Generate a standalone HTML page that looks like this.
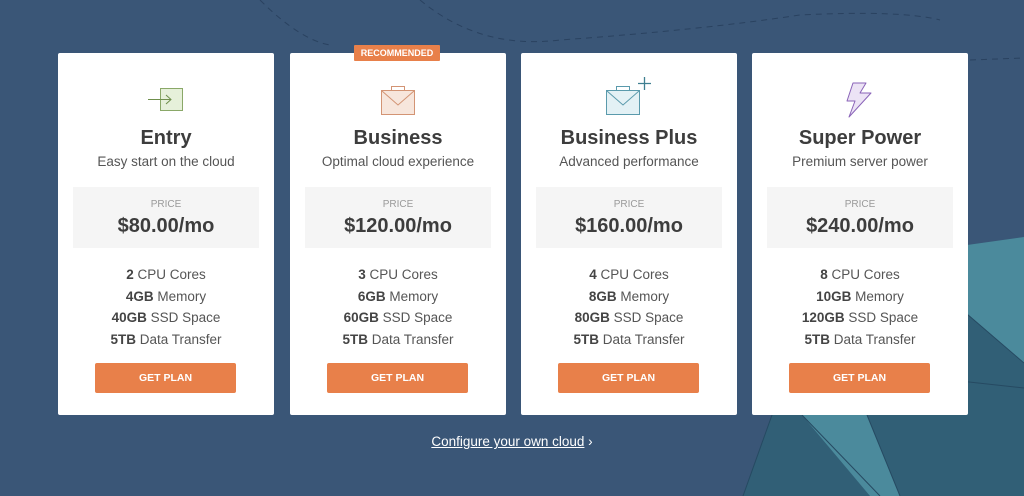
<!DOCTYPE html>
<html><head><style>
body{margin:0;width:1024px;height:496px;overflow:hidden;background:#3a5677;font-family:"Liberation Sans",sans-serif;position:relative}
.card{position:absolute;top:53px;width:216px;height:362px;background:#fff;border-radius:2px;text-align:center;color:#444}
.ic{position:absolute;left:0;top:28px;width:216px;height:40px;overflow:visible}
.t{position:absolute;left:0;right:0;font-size:20px;font-weight:bold;color:#3d3d3d;top:74px}
.s{position:absolute;top:101px;left:0;right:0;font-size:13.5px;color:#555}
.pb{position:absolute;left:15px;right:15px;top:134px;height:61px;background:#f5f5f5}
.pl{position:absolute;top:12px;left:0;right:0;font-size:10px;color:#999}
.pv{position:absolute;top:28px;left:0;right:0;font-size:20px;font-weight:bold;color:#3d3d3d}
.sp{position:absolute;top:211px;left:0;right:0;font-size:13.5px;line-height:21.5px;color:#555}
.sp b{color:#444}
.btn{position:absolute;left:37px;width:141px;top:310px;height:30px;background:#e8804a;border-radius:2px;color:#fff;font-size:10.5px;font-weight:bold;line-height:30px}
.rec{position:absolute;left:354px;top:45px;width:86px;height:16px;background:#e8804a;color:#fff;font-size:9px;font-weight:bold;line-height:16px;text-align:center;border-radius:1px}
.cfg{position:absolute;top:434px;left:0;right:0;text-align:center;color:#fff;font-size:13.5px}
.cfg span{text-decoration:underline}
</style></head><body>
<svg width="1024" height="496" style="position:absolute;left:0;top:0">
<path d="M260 0 Q300 40 330 45" stroke="#2a4260" stroke-dasharray="6 5" fill="none"/>
<path d="M420 0 Q480 50 560 40 Q700 30 800 15 Q900 10 940 20" stroke="#2a4260" stroke-dasharray="6 5" fill="none"/>
<path d="M970 60 L1024 58" stroke="#2a4260" stroke-dasharray="6 5" fill="none"/>
<polygon points="960,246 1024,237 1024,496 743,496 772,415 960,415" fill="#315f76"/>
<polygon points="960,246 1024,237 1024,363 960,308" fill="#4b8a9c"/>
<polygon points="802,415 867,415 900,496 870,496" fill="#4b8a9c"/>
<path d="M960 308 L1024 363 M960 381 L1024 388 M802 415 L880 496 M867 415 L900 496 M772 415 L743 496" stroke="#264a62" stroke-width="1" fill="none"/>
</svg>
<div class="card" style="left:58px">
<svg class="ic" viewBox="0 0 216 40"><rect x="102.5" y="7.5" width="22" height="22" fill="#e6f0da" stroke="#8aa868"/><path d="M90 18.5h23M108 14l5 4.5-5 4.5" stroke="#6f8f4c" fill="none"/></svg>
<div class="t">Entry</div><div class="s">Easy start on the cloud</div>
<div class="pb"><div class="pl">PRICE</div><div class="pv">$80.00/mo</div></div>
<div class="sp"><b>2</b> CPU Cores<br><b>4GB</b> Memory<br><b>40GB</b> SSD Space<br><b>5TB</b> Data Transfer</div>
<div class="btn">GET PLAN</div></div>
<div class="card" style="left:290px">
<svg class="ic" viewBox="0 0 216 40"><rect x="91.5" y="9.5" width="33" height="24" fill="#f7e6dc" stroke="#d39474"/><rect x="101.5" y="5.5" width="13" height="4" fill="none" stroke="#d39474"/><path d="M92 10l16 14 16-14" stroke="#d39474" fill="none"/></svg>
<div class="t">Business</div><div class="s">Optimal cloud experience</div>
<div class="pb"><div class="pl">PRICE</div><div class="pv">$120.00/mo</div></div>
<div class="sp"><b>3</b> CPU Cores<br><b>6GB</b> Memory<br><b>60GB</b> SSD Space<br><b>5TB</b> Data Transfer</div>
<div class="btn">GET PLAN</div></div>
<div class="rec">RECOMMENDED</div>
<div class="card" style="left:521px">
<svg class="ic" viewBox="0 0 216 40"><rect x="85.5" y="9.5" width="33" height="24" fill="#e3f1f5" stroke="#5a9aac"/><rect x="95.5" y="5.5" width="13" height="4" fill="none" stroke="#5a9aac"/><path d="M86 10l16 14 16-14" stroke="#5a9aac" fill="none"/><path d="M123.5 -4v13M117 2.5h13" stroke="#3f7f91" stroke-width="1.3"/></svg>
<div class="t">Business Plus</div><div class="s">Advanced performance</div>
<div class="pb"><div class="pl">PRICE</div><div class="pv">$160.00/mo</div></div>
<div class="sp"><b>4</b> CPU Cores<br><b>8GB</b> Memory<br><b>80GB</b> SSD Space<br><b>5TB</b> Data Transfer</div>
<div class="btn">GET PLAN</div></div>
<div class="card" style="left:752px">
<svg class="ic" viewBox="0 0 216 40"><path d="M101 2h13l-6 10h11l-22 24 6-16h-8z" fill="#ece3f5" stroke="#8a63b8" stroke-linejoin="round"/></svg>
<div class="t">Super Power</div><div class="s">Premium server power</div>
<div class="pb"><div class="pl">PRICE</div><div class="pv">$240.00/mo</div></div>
<div class="sp"><b>8</b> CPU Cores<br><b>10GB</b> Memory<br><b>120GB</b> SSD Space<br><b>5TB</b> Data Transfer</div>
<div class="btn">GET PLAN</div></div>
<div class="cfg"><span>Configure your own cloud</span> ›</div>
</body></html>
